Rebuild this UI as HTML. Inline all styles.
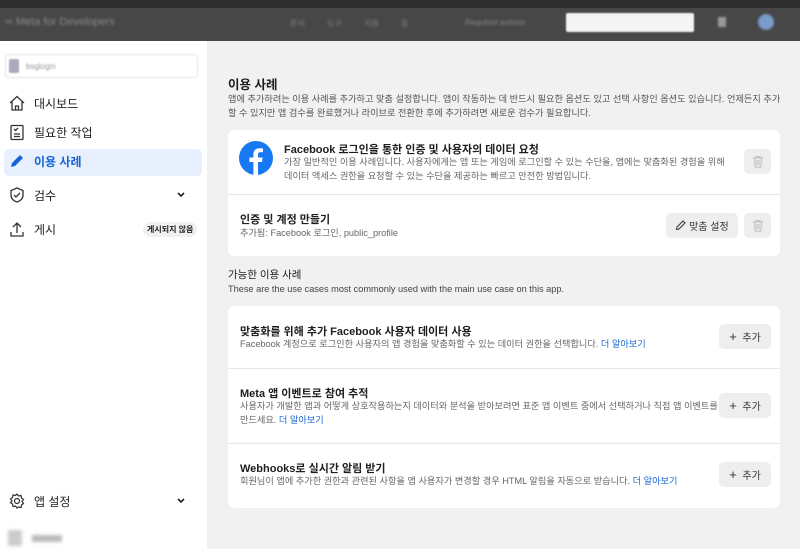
<!DOCTYPE html>
<html><head><meta charset="utf-8"><style>
*{box-sizing:border-box;margin:0;padding:0}
body{width:800px;height:549px;overflow:hidden;background:#f1f1f1;font-family:"Liberation Sans","Noto Sans CJK KR",sans-serif;color:#1c1e21;position:relative}
.top{position:absolute;left:0;top:0;width:800px;height:41px;background:#474747}
.top .strip{position:absolute;left:0;top:0;width:800px;height:8px;background:#2e2e2e}
.side{position:absolute;left:0;top:41px;width:207px;height:508px;background:#fff}
.nav{position:absolute;left:8px;font-size:12px;display:flex;align-items:center}
.nav svg{margin-right:8px}
.main{position:absolute;left:228px}
.card{position:absolute;left:228px;width:552px;background:#fff;border-radius:6px}
.t{font-size:11px;font-weight:bold;color:#1c1e21}
.d{font-size:9.2px;color:#666;line-height:14px}
.btn{position:absolute;background:#eee;border-radius:5px;font-size:10px;display:flex;align-items:center;justify-content:center;color:#333}
a{color:#1665d8;text-decoration:none}
.hr{position:absolute;left:0;width:552px;height:1px;background:#e6e6e6}
.chev{position:absolute;left:176px}
</style></head><body>
<div class="top"><div class="strip"></div>
<div style="position:absolute;left:5px;top:16px;font-size:11px;color:#888;filter:blur(1px)">∞ Meta for Developers</div>
<div style="position:absolute;left:290px;top:18px;font-size:8px;color:#888;filter:blur(1px);word-spacing:20px">문서 도구 지원 등</div>
<div style="position:absolute;left:465px;top:18px;font-size:8px;color:#888;filter:blur(1px)">Required actions</div>
<div style="position:absolute;left:566px;top:13px;width:128px;height:19px;background:#f4f4f4;border-radius:2px;filter:blur(.8px)"></div>
<div style="position:absolute;left:718px;top:17px;width:8px;height:10px;background:#999;filter:blur(1px)"></div>
<div style="position:absolute;left:758px;top:14px;width:16px;height:16px;border-radius:50%;background:#7a9cc8;filter:blur(1px)"></div>
</div>
<div class="side">
<div style="position:absolute;left:5px;top:13px;width:193px;height:24px;border:1px solid #e5e5e5;border-radius:4px;filter:blur(.8px)"><div style="position:absolute;left:3px;top:4px;width:10px;height:14px;background:#aab;border-radius:2px"></div><div style="position:absolute;left:20px;top:7px;font-size:8px;color:#999">bsglogin</div></div>
<div style="position:absolute;left:4px;top:108px;width:198px;height:27px;background:#e7f0fc;border-radius:5px"></div>
</div>
<div class="nav" style="top:94px"><svg width="18" height="18" viewBox="0 0 18 18" fill="none" stroke="#333" stroke-width="1.3"><path d="M2 9L9 2.5 16 9M4 7.5V16h10V7.5M7.5 16v-4h3v4"/></svg>대시보드</div>
<div class="nav" style="top:123px"><svg width="18" height="18" viewBox="0 0 18 18" fill="none" stroke="#333" stroke-width="1.3"><rect x="3" y="2.5" width="12" height="14" rx="1"/><path d="M6 6l1.5 1.5L10 5M6 11h6M6 13.5h6"/></svg>필요한 작업</div>
<div class="nav" style="top:152px;color:#1665d8;font-weight:bold"><svg width="18" height="18" viewBox="0 0 18 18"><path d="M3 15l1-4 8-8 3 3-8 8z" fill="#1665d8"/></svg>이용 사례</div>
<div class="nav" style="top:186px"><svg width="18" height="18" viewBox="0 0 18 18" fill="none" stroke="#333" stroke-width="1.3"><path d="M9 2l6 2.5v4.5c0 4-3 6-6 7-3-1-6-3-6-7V4.5z"/><path d="M6 9l2 2 4-4"/></svg>검수</div>
<svg class="chev" style="top:191px" width="10" height="8" viewBox="0 0 10 8"><path d="M2 2l3 3 3-3" fill="none" stroke="#222" stroke-width="1.6"/></svg>
<div class="nav" style="top:220px"><svg width="18" height="18" viewBox="0 0 18 18" fill="none" stroke="#333" stroke-width="1.3"><path d="M9 13V3M5 7l4-4 4 4M3 12v4h12v-4"/></svg>게시</div>
<div style="position:absolute;left:143px;top:222px;font-size:8px;background:#f0f0f0;border-radius:8px;padding:2px 4px;font-weight:bold">게시되지 않음</div>
<div class="nav" style="top:492px"><svg width="18" height="18" viewBox="0 0 18 18" fill="none" stroke="#333" stroke-width="1.2"><circle cx="9" cy="9" r="2.5"/><path d="M9 2l1.5 2 2.5-.5.5 2.5 2 1.5-1.5 2 1.5 2-2 1.5-.5 2.5-2.5-.5L9 16l-1.5-2-2.5.5-.5-2.5L2.5 10.5 4 9 2.5 7l2-1.5L5 3l2.5.5z"/></svg>앱 설정</div>
<svg class="chev" style="top:497px" width="10" height="8" viewBox="0 0 10 8"><path d="M2 2l3 3 3-3" fill="none" stroke="#222" stroke-width="1.6"/></svg>
<div style="position:absolute;left:8px;top:530px;width:14px;height:16px;background:#ccc;filter:blur(1.5px)"></div>
<div style="position:absolute;left:32px;top:535px;width:30px;height:7px;background:#bbb;filter:blur(1.5px)"></div>

<div class="main" style="top:74px;font-size:12.5px;font-weight:bold">이용 사례</div>
<div class="main d" style="top:92px;color:#555;width:560px;white-space:nowrap;overflow:hidden">앱에 추가하려는 이용 사례를 추가하고 맞춤 설정합니다. 앱이 작동하는 데 반드시 필요한 옵션도 있고 선택 사항인 옵션도 있습니다. 언제든지 추가</div>
<div class="main d" style="top:106px;color:#555">할 수 있지만 앱 검수를 완료했거나 라이브로 전환한 후에 추가하려면 새로운 검수가 필요합니다.</div>

<div class="card" style="top:130px;height:126px">
<svg style="position:absolute;left:11px;top:11px" width="34" height="34" viewBox="0 0 34 34"><circle cx="17" cy="17" r="17" fill="#1877f2"/><path d="M19 34V21h4l.6-4.5H19v-3c0-1.3.4-2.2 2.2-2.2H24V7.4c-.5 0-2-.2-3.6-.2-3.5 0-6 2.1-6 6v3.3h-4V21h4v13z" fill="#fff"/></svg>
<div class="t" style="position:absolute;left:56px;top:11px">Facebook 로그인을 통한 인증 및 사용자의 데이터 요청</div>
<div class="d" style="position:absolute;left:56px;top:25px">가장 일반적인 이용 사례입니다. 사용자에게는 앱 또는 게임에 로그인할 수 있는 수단을, 앱에는 맞춤화된 경험을 위해<br>데이터 액세스 권한을 요청할 수 있는 수단을 제공하는 빠르고 안전한 방법입니다.</div>
<div class="btn" style="left:516px;top:19px;width:27px;height:25px"><svg width="12" height="13" viewBox="0 0 12 13" fill="none" stroke="#bbb" stroke-width="1"><path d="M1 3h10M4 3V1.5h4V3M2.5 3l.7 9h5.6l.7-9M5 5v5M7 5v5"/></svg></div>
<div class="hr" style="top:64px"></div>
<div class="t" style="position:absolute;left:12px;top:81px">인증 및 계정 만들기</div>
<div class="d" style="position:absolute;left:12px;top:96px">추가됨: Facebook 로그인, public_profile</div>
<div class="btn" style="left:438px;top:83px;width:72px;height:25px"><svg width="11" height="11" viewBox="0 0 11 11" fill="none" stroke="#333" stroke-width="1"><path d="M1.5 9.5l.5-2.5 6-6 2 2-6 6z"/></svg>&nbsp;맞춤 설정</div>
<div class="btn" style="left:516px;top:83px;width:27px;height:25px"><svg width="12" height="13" viewBox="0 0 12 13" fill="none" stroke="#bbb" stroke-width="1"><path d="M1 3h10M4 3V1.5h4V3M2.5 3l.7 9h5.6l.7-9M5 5v5M7 5v5"/></svg></div>
</div>

<div class="main t" style="top:267px;font-weight:normal;font-size:10.5px">가능한 이용 사례</div>
<div class="main d" style="top:282px;color:#444">These are the use cases most commonly used with the main use case on this app.</div>

<div class="card" style="top:306px;height:202px">
<div class="t" style="position:absolute;left:12px;top:17px">맞춤화를 위해 추가 Facebook 사용자 데이터 사용</div>
<div class="d" style="position:absolute;left:12px;top:31px">Facebook 계정으로 로그인한 사용자의 앱 경험을 맞춤화할 수 있는 데이터 권한을 선택합니다. <a>더 알아보기</a></div>
<div class="btn" style="left:491px;top:18px;width:52px;height:25px"><span style="font-size:13px">+</span>&nbsp; 추가</div>
<div class="hr" style="top:62px"></div>
<div class="t" style="position:absolute;left:12px;top:79px">Meta 앱 이벤트로 참여 추적</div>
<div class="d" style="position:absolute;left:12px;top:93px">사용자가 개발한 앱과 어떻게 상호작용하는지 데이터와 분석을 받아보려면 표준 앱 이벤트 중에서 선택하거나 직접 앱 이벤트를<br>만드세요. <a>더 알아보기</a></div>
<div class="btn" style="left:491px;top:87px;width:52px;height:25px"><span style="font-size:13px">+</span>&nbsp; 추가</div>
<div class="hr" style="top:137px"></div>
<div class="t" style="position:absolute;left:12px;top:154px">Webhooks로 실시간 알림 받기</div>
<div class="d" style="position:absolute;left:12px;top:168px">회원님이 앱에 추가한 권한과 관련된 사항을 앱 사용자가 변경할 경우 HTML 알림을 자동으로 받습니다. <a>더 알아보기</a></div>
<div class="btn" style="left:491px;top:156px;width:52px;height:25px"><span style="font-size:13px">+</span>&nbsp; 추가</div>
</div>
</body></html>
